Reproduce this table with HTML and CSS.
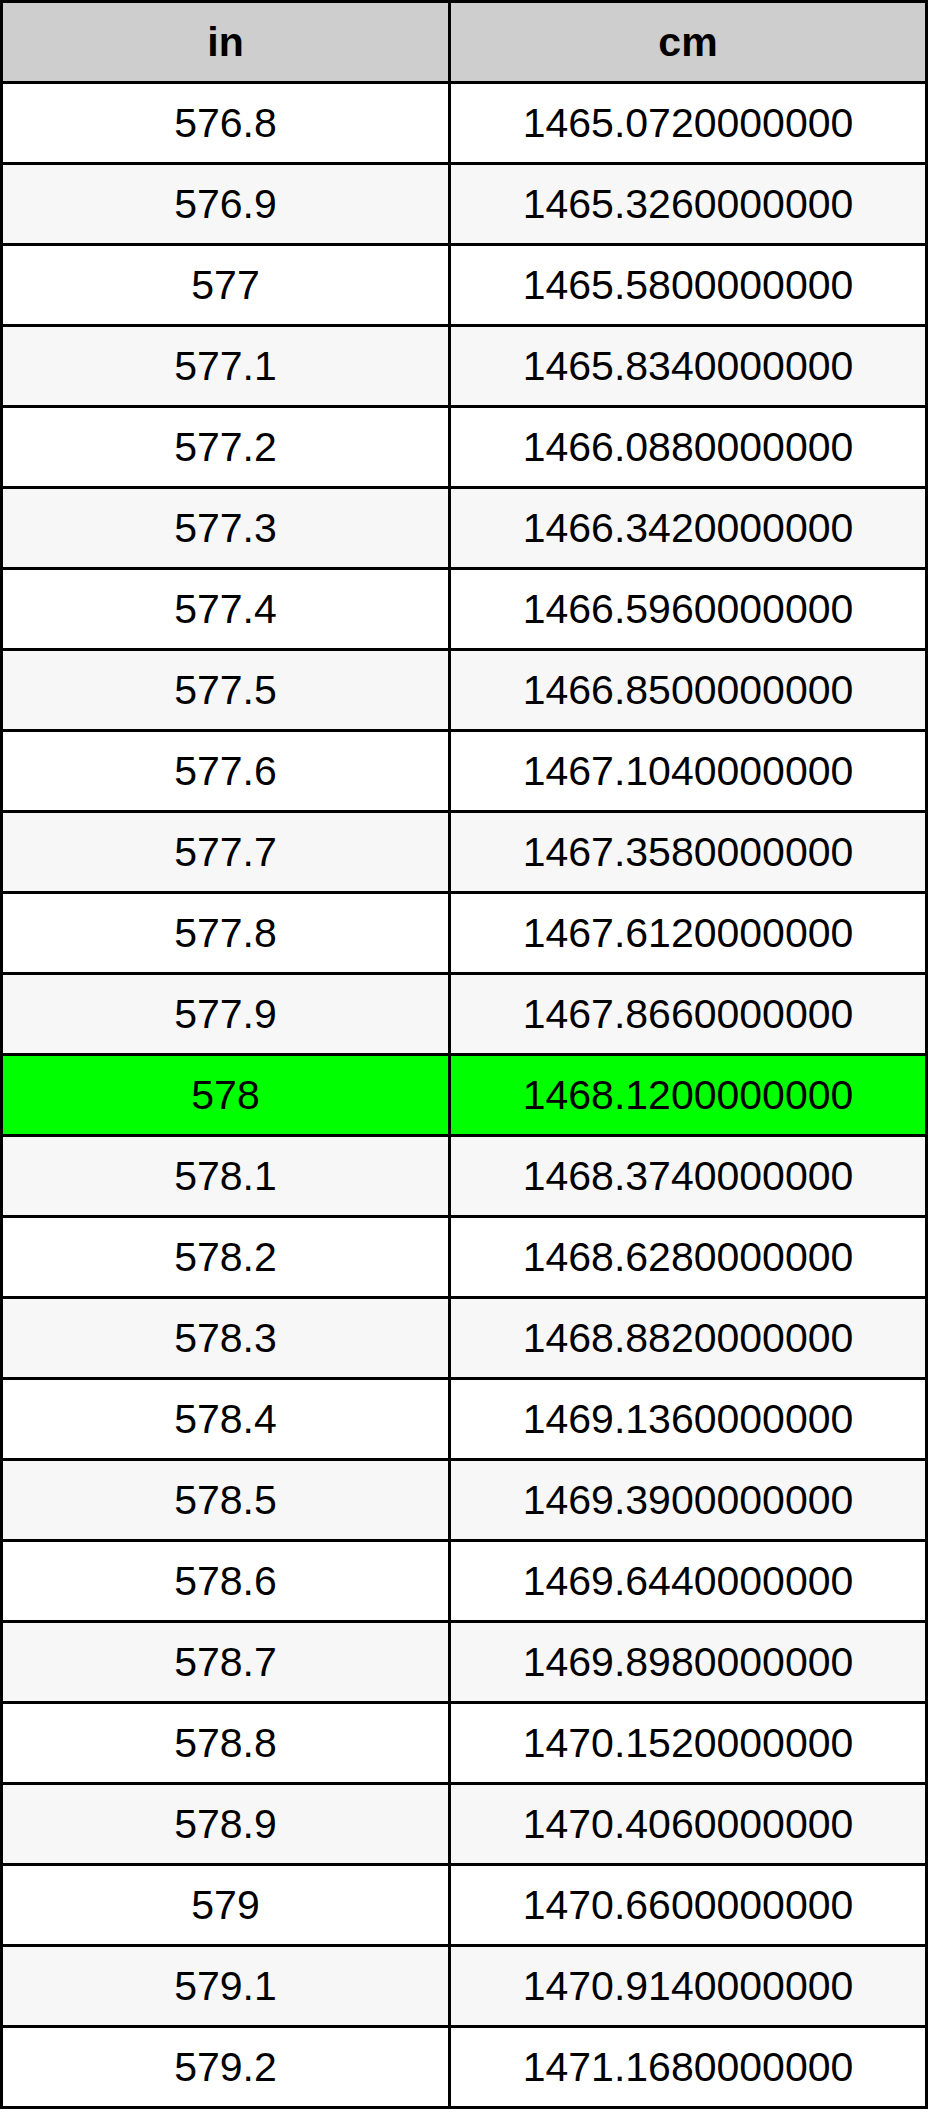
FILE: index.html
```html
<!DOCTYPE html>
<html lang="en">
<head>
<meta charset="utf-8">
<title>in to cm</title>
<link rel="stylesheet" href="styles.css">
</head>
<body>
<table class="conv">
<thead>
<tr><th class="c1">in</th><th class="c2">cm</th></tr>
</thead>
<tbody>
<tr><td>576.8</td><td>1465.0720000000</td></tr>
<tr class="alt"><td>576.9</td><td>1465.3260000000</td></tr>
<tr><td>577</td><td>1465.5800000000</td></tr>
<tr class="alt"><td>577.1</td><td>1465.8340000000</td></tr>
<tr><td>577.2</td><td>1466.0880000000</td></tr>
<tr class="alt"><td>577.3</td><td>1466.3420000000</td></tr>
<tr><td>577.4</td><td>1466.5960000000</td></tr>
<tr class="alt"><td>577.5</td><td>1466.8500000000</td></tr>
<tr><td>577.6</td><td>1467.1040000000</td></tr>
<tr class="alt"><td>577.7</td><td>1467.3580000000</td></tr>
<tr><td>577.8</td><td>1467.6120000000</td></tr>
<tr class="alt"><td>577.9</td><td>1467.8660000000</td></tr>
<tr class="hl"><td>578</td><td>1468.1200000000</td></tr>
<tr class="alt"><td>578.1</td><td>1468.3740000000</td></tr>
<tr><td>578.2</td><td>1468.6280000000</td></tr>
<tr class="alt"><td>578.3</td><td>1468.8820000000</td></tr>
<tr><td>578.4</td><td>1469.1360000000</td></tr>
<tr class="alt"><td>578.5</td><td>1469.3900000000</td></tr>
<tr><td>578.6</td><td>1469.6440000000</td></tr>
<tr class="alt"><td>578.7</td><td>1469.8980000000</td></tr>
<tr><td>578.8</td><td>1470.1520000000</td></tr>
<tr class="alt"><td>578.9</td><td>1470.4060000000</td></tr>
<tr><td>579</td><td>1470.6600000000</td></tr>
<tr class="alt"><td>579.1</td><td>1470.9140000000</td></tr>
<tr><td>579.2</td><td>1471.1680000000</td></tr>
</tbody>
</table>
</body>
</html>
```
FILE: styles.css
```css
html, body {
  margin: 0;
  padding: 0;
  background: #ffffff;
}

.conv {
  table-layout: fixed;
  width: 928px;
  border-spacing: 0;
  border-top: 3px solid #000;
  border-left: 3px solid #000;
  font-family: "Liberation Sans", Arial, sans-serif;
  font-size: 41px;
  color: #000;
}

.conv th,
.conv td {
  height: 78px;
  padding: 0;
  text-align: center;
  vertical-align: middle;
  border-right: 3px solid #000;
  border-bottom: 3px solid #000;
  line-height: 1;
}

.conv th {
  font-weight: bold;
  background: #cecece;
}

.conv .c1 {
  width: 445px;
}

.conv tr.alt td {
  background: #f7f7f7;
}

.conv tr.hl td {
  background: #00ff00;
}
```
